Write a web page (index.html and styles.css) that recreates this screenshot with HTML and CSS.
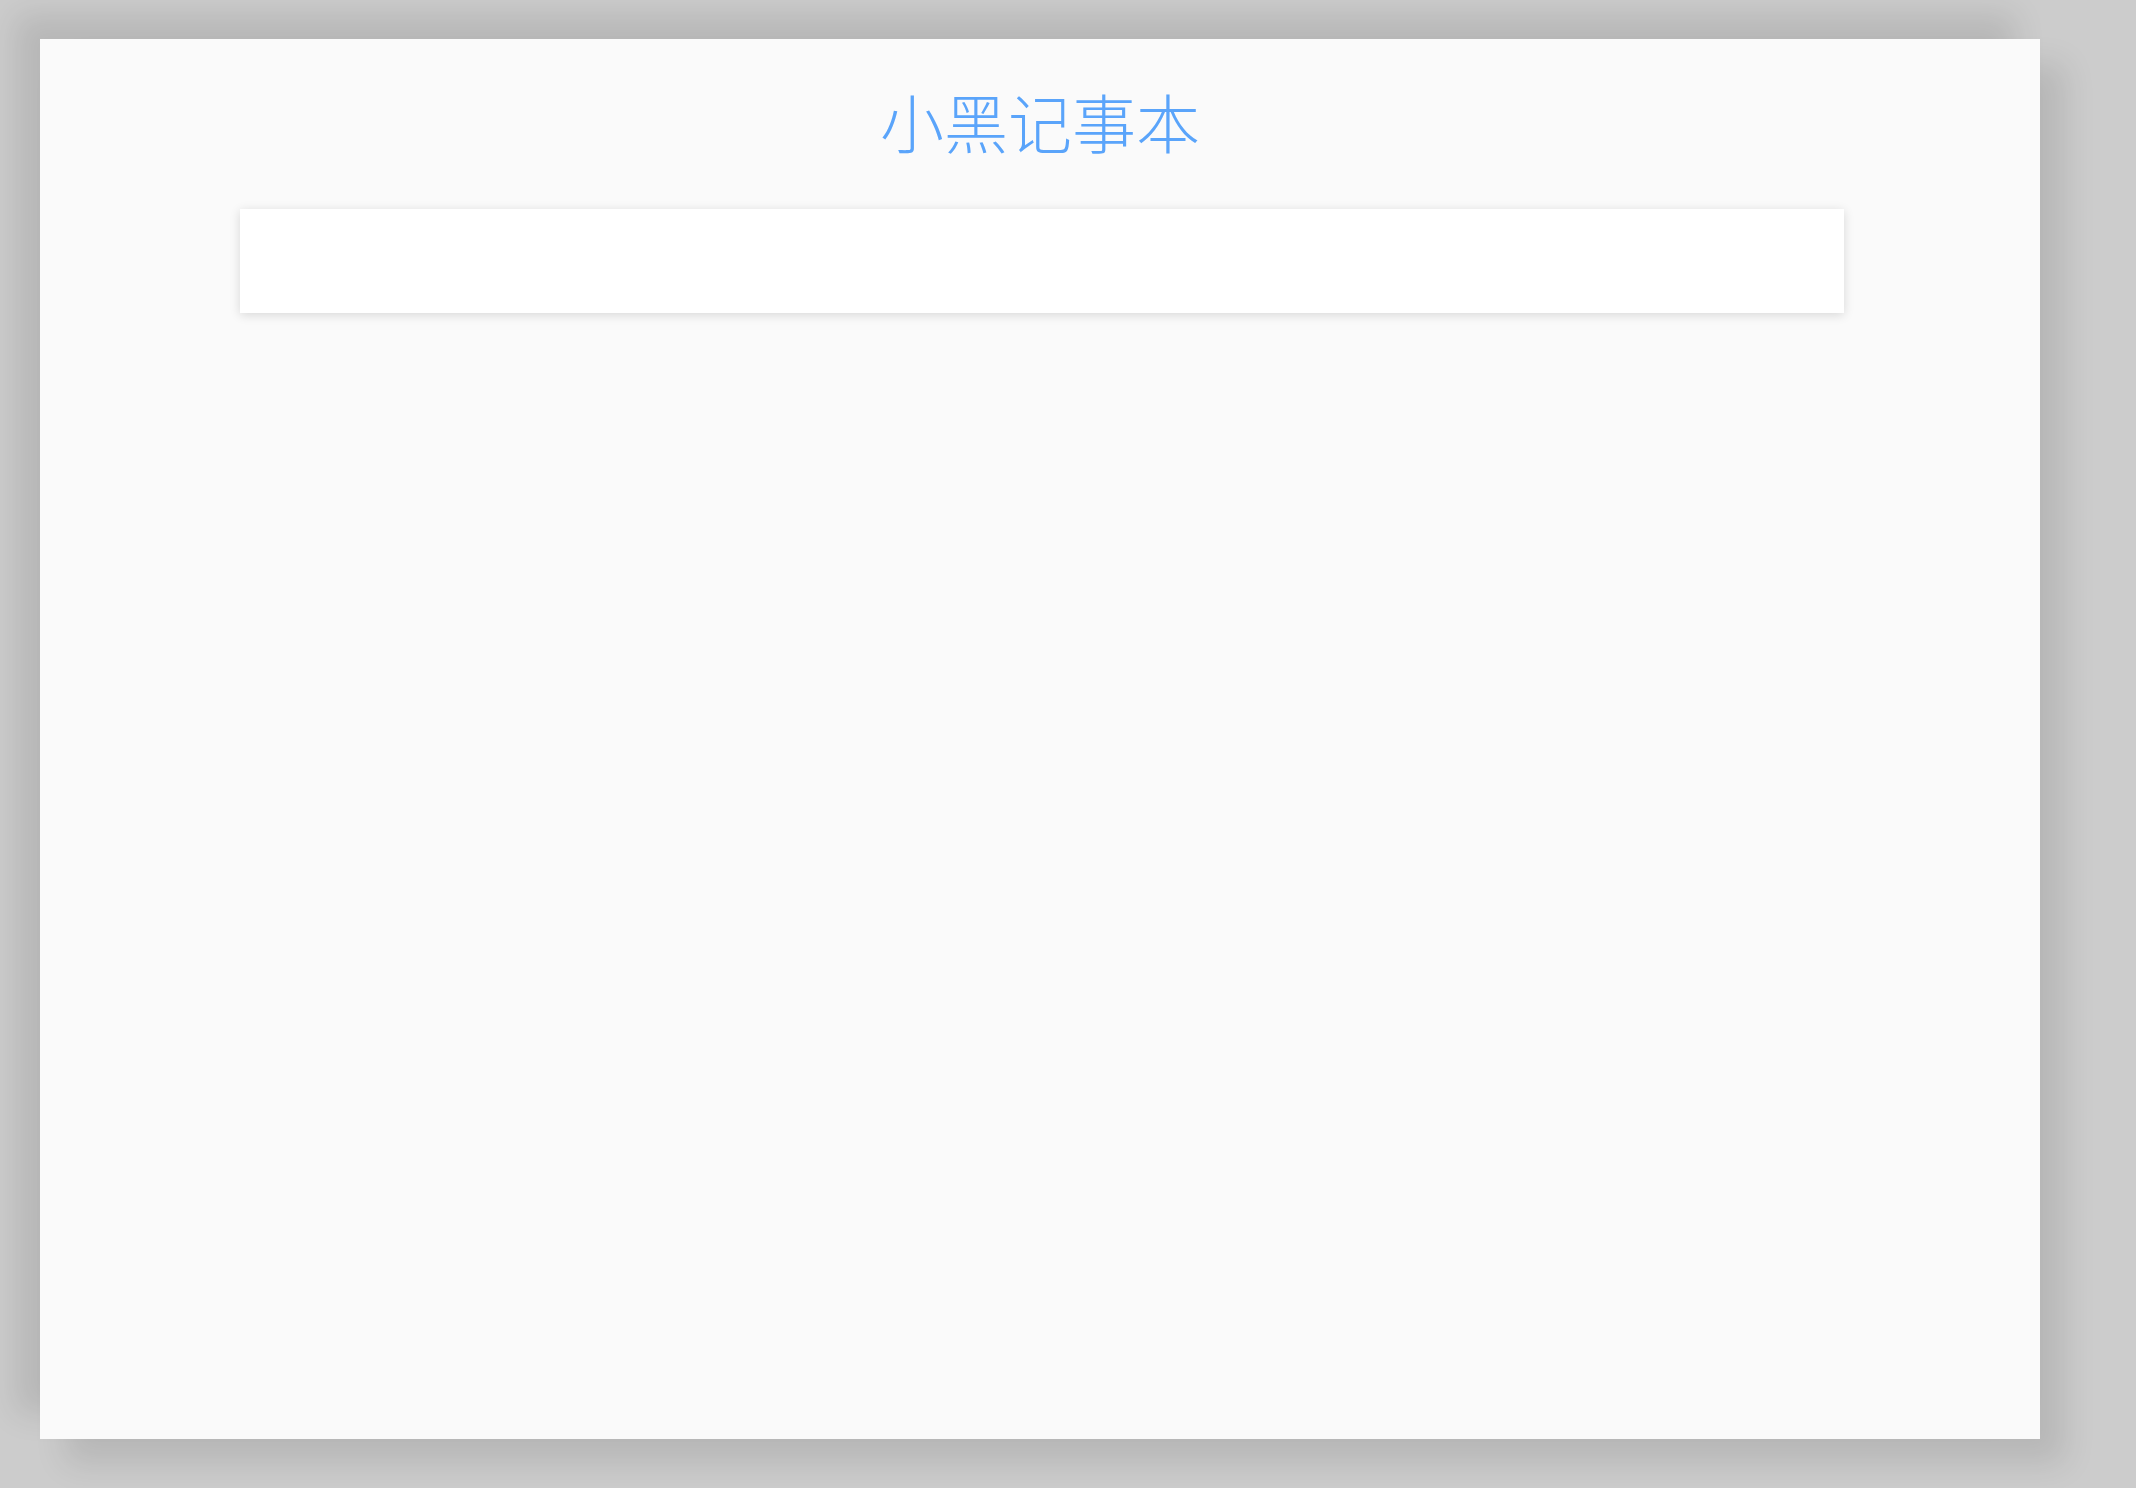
FILE: index.html
```html
<!DOCTYPE html>
<html lang="zh">
<head>
<meta charset="utf-8">
<title>小黑记事本</title>
<link rel="stylesheet" href="styles.css">
</head>
<body>
<main class="card">
  <h1 class="title">小黑记事本</h1>
  <div class="entry">
    <input class="new-todo" type="text" aria-label="新任务">
  </div>
</main>
</body>
</html>
```

FILE: styles.css
```css
html, body {
  margin: 0;
  padding: 0;
}
body {
  background: #cccccc;
  width: 2136px;
  height: 1488px;
  overflow: hidden;
  padding: 39px 0 0 40px;
  box-sizing: border-box;
  font-family: "Noto Sans CJK SC", "Noto Sans", sans-serif;
}
.card {
  width: 2000px;
  height: 1400px;
  background: #fafafa;
  box-shadow: 25px 25px 30px rgba(0, 0, 0, 0.1), -25px -25px 30px rgba(0, 0, 0, 0.1);
  display: flex;
  flex-direction: column;
  align-items: center;
  padding-top: 49px;
  box-sizing: border-box;
}
.title {
  margin: 0;
  font-size: 64px;
  line-height: 64px;
  font-weight: 200;
  color: #5aa4fa;
}
.entry {
  margin: 57px 0 0 4px;
  width: 1604px;
  height: 104px;
  background: #ffffff;
  box-shadow: 0 2px 10px rgba(0, 0, 0, 0.14);
  display: flex;
}
.new-todo {
  flex: 1;
  border: none;
  outline: none;
  background: transparent;
  font: inherit;
  font-size: 32px;
  padding: 0 24px;
}
```
